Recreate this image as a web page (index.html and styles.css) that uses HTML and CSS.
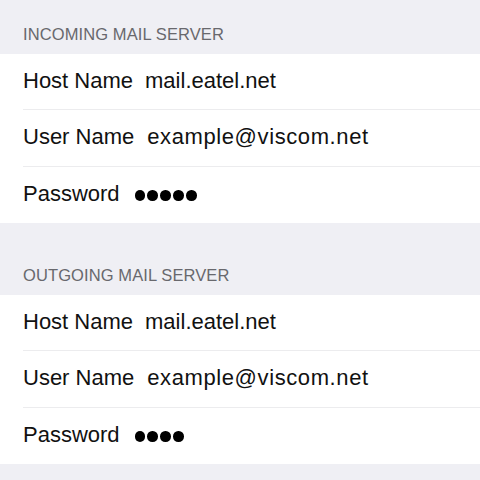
FILE: index.html
```html
<!DOCTYPE html>
<html>
<head>
<meta charset="utf-8">
<link rel="stylesheet" href="styles.css">
</head>
<body>
<div class="page">
  <section class="group">
    <div class="group-header">Incoming Mail Server</div>
    <div class="list">
      <div class="row">
        <span class="label">Host Name</span>
        <span class="value">mail.eatel.net</span>
      </div>
      <div class="row">
        <span class="label">User Name</span>
        <span class="value value-user">example@viscom.net</span>
      </div>
      <div class="row">
        <span class="label">Password</span>
        <span class="dots"><i></i><i></i><i></i><i></i><i></i></span>
      </div>
    </div>
  </section>
  <section class="group group-second">
    <div class="group-header">Outgoing Mail Server</div>
    <div class="list">
      <div class="row">
        <span class="label">Host Name</span>
        <span class="value">mail.eatel.net</span>
      </div>
      <div class="row">
        <span class="label">User Name</span>
        <span class="value value-user">example@viscom.net</span>
      </div>
      <div class="row">
        <span class="label">Password</span>
        <span class="dots"><i></i><i></i><i></i><i></i></span>
      </div>
    </div>
  </section>
</div>
</body>
</html>
```

FILE: styles.css
```css
html, body {
  margin: 0;
  padding: 0;
  background: #efeff4;
}

.page {
  width: 480px;
  height: 480px;
  overflow: hidden;
  font-family: "Liberation Sans", Arial, sans-serif;
}

.group-second {
  margin-top: 18px;
}

.group-header {
  height: 54px;
  box-sizing: border-box;
  display: flex;
  align-items: flex-end;
  padding: 0 0 10px 23px;
  font-size: 16.5px;
  line-height: 20px;
  color: #68686d;
  text-transform: uppercase;
  letter-spacing: 0.1px;
}

.list {
  background: #ffffff;
}

.row {
  height: 56.33px;
  box-sizing: border-box;
  margin-left: 23px;
  display: flex;
  align-items: center;
  gap: 12px;
  border-bottom: 1.5px solid #ececee;
  color: #111111;
  font-size: 22px;
}

.row:last-child {
  border-bottom: none;
}

.label,
.value {
  line-height: 22px;
  padding-bottom: 2px;
}

.value-user {
  margin-left: 1px;
  letter-spacing: 0.6px;
}

.dots {
  display: flex;
  gap: 2.4px;
  margin-left: 3px;
  padding-top: 1px;
}

.dots i {
  display: block;
  width: 10.5px;
  height: 10.5px;
  border-radius: 50%;
  background: #000000;
}
```
